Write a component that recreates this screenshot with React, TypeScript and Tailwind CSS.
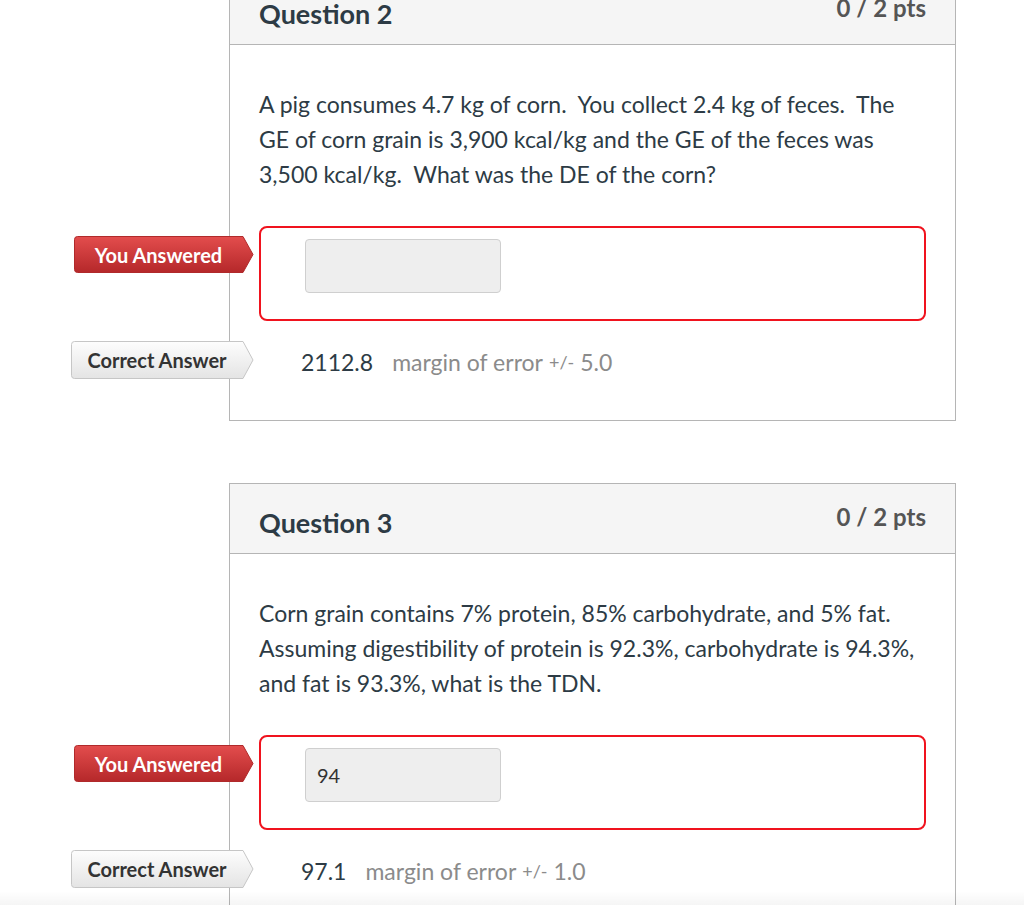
import React from "react";

function Tag({ kind }: { kind: "you" | "correct" }) {
  const you = kind === "you";
  const w = you ? 180 : 183;
  const h = you ? 37 : 38;
  const body = w - 11;
  const id = you ? "gy" : "gc";
  return (
    <div
      className={
        you
          ? "absolute left-[-185px] top-[10px] w-[180px] h-[37px]"
          : "absolute left-[-188px] top-0 w-[183px] h-[38px]"
      }
    >
      <svg width={w} height={h} className="absolute inset-0">
        <defs>
          <linearGradient id={id} x1="0" y1="0" x2="0" y2="1">
            {you ? (
              <>
                <stop offset="0" stopColor="#e34d4d" />
                <stop offset="1" stopColor="#b5282a" />
              </>
            ) : (
              <>
                <stop offset="0" stopColor="#fdfdfd" />
                <stop offset="1" stopColor="#e4e4e4" />
              </>
            )}
          </linearGradient>
        </defs>
        <path
          d={`M3.5 0.5 H${body} L${w - 1} ${h / 2} L${body} ${h - 0.5} H3.5 Q0.5 ${h - 0.5} 0.5 ${h - 3.5} V3.5 Q0.5 0.5 3.5 0.5 Z`}
          fill={`url(#${id})`}
          stroke={you ? "#b02a2b" : "#c6c6c6"}
          strokeWidth="1"
        />
      </svg>
      <div
        className={
          "relative flex h-full items-center justify-center font-bold text-[20px] " +
          (you ? "w-[169px] text-white" : "w-[172px] text-[#333333]")
        }
      >
        {you ? "You Answered" : "Correct Answer"}
      </div>
    </div>
  );
}

function Question({
  num,
  lines,
  answer,
  correct,
  margin,
  last,
}: {
  num: number;
  lines: React.ReactNode;
  answer: string;
  correct: string;
  margin: string;
  last?: boolean;
}) {
  return (
    <div className={"border border-[#b5b5b5] " + (last ? "border-b-0" : "")}>
      <div className="flex h-[70px] justify-between border-b border-[#b5b5b5] bg-[#f5f5f5] pl-[29px] pr-[29px]">
        <div className="pt-[23px] text-[27px] font-bold leading-[32px] text-[#2d3b45]">
          Question {num}
        </div>
        <div className="pt-[18px] text-[24px] font-bold leading-[29px] text-[#555555]">
          0 / 2 pts
        </div>
      </div>
      <div className={"relative pl-[29px] pr-[29px] pt-[42px] " + (last ? "pb-[20px]" : "pb-[41px]")}>
        <div className="w-[660px] text-[23px] leading-[35px] text-[#2d3b45]">{lines}</div>
        <div className="relative mt-[34px]">
          <Tag kind="you" />
          <div className="h-[95px] rounded-[8px] border-2 border-[#f0131e] pl-[44px] pt-[11px]">
            <div className="flex h-[54px] w-[196px] items-center rounded-[4px] border border-[#cfcfcf] bg-[#eeeeee] px-[11px] text-[20px] text-[#333333]">
              {answer}
            </div>
          </div>
        </div>
        <div className="relative mt-[20px] h-[38px]">
          <Tag kind="correct" />
          <div className="flex h-full items-center pl-[42px] pt-[5px] text-[23px]">
            <span className="text-[#2d3b45]">{correct}</span>
            <span className="ml-[19px] text-[#8b8b8b]">margin of error</span>
            <span className="ml-[6px] text-[18px] text-[#8b8b8b]">+/-</span>
            <span className="ml-[6px] text-[#8b8b8b]">{margin}</span>
          </div>
        </div>
      </div>
    </div>
  );
}

export default function App() {
  return (
    <div className="relative h-[905px] overflow-hidden bg-white font-['Lato',sans-serif]">
      <div className="mt-[-26px] pl-[229px] pr-[68px]">
        <Question
          num={2}
          lines={
            <>
              A pig consumes 4.7 kg of corn.&nbsp; You collect 2.4 kg of feces.&nbsp; The GE of corn grain is 3,900 kcal/kg and the GE of the feces was 3,500 kcal/kg.&nbsp; What was the DE of the corn?
            </>
          }
          answer=""
          correct="2112.8"
          margin="5.0"
        />
        <div className="mt-[62px]">
          <Question
            num={3}
            lines={
              <>
                Corn grain contains 7% protein, 85% carbohydrate, and 5% fat.&nbsp; Assuming digestibility of protein is 92.3%, carbohydrate is 94.3%, and fat is 93.3%, what is the TDN.
              </>
            }
            answer="94"
            correct="97.1"
            margin="1.0"
            last
          />
        </div>
      </div>
      <div className="pointer-events-none absolute bottom-0 left-0 right-0 h-[14px] bg-gradient-to-b from-transparent to-black/[0.04]" />
    </div>
  );
}
